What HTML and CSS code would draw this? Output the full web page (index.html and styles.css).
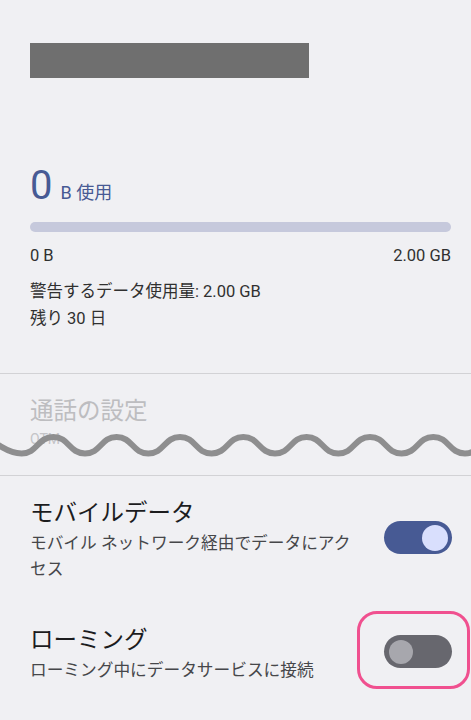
FILE: index.html
```html
<!DOCTYPE html>
<html lang="ja">
<head>
<meta charset="utf-8">
<link rel="stylesheet" href="styles.css">
</head>
<body>
<main class="screen">
  <section class="hero">
    <div class="redacted"></div>
  </section>

  <section class="usage">
    <div class="amount"><span class="amount-num">0</span><span class="amount-unit">B 使用</span></div>
    <div class="bar"></div>
    <div class="scale"><span>0 B</span><span>2.00 GB</span></div>
    <div class="notes">
      <p>警告するデータ使用量: 2.00 GB</p>
      <p>残り 30 日</p>
    </div>
  </section>

  <section class="call">
    <div class="call-title">通話の設定</div>
    <div class="call-sub">OTM</div>
    <svg class="wave" viewBox="0 0 471 30" width="471" height="30" aria-hidden="true">
      <path d="M-10 12 C -2 12 6 23.5 21.6 23.5 C 37.4 23.5 37.4 7 53.3 7 C 69.1 7 69.1 23.5 85 23.5 C 100.8 23.5 100.8 7 116.6 7 C 132.5 7 132.5 23.5 148.3 23.5 C 164.1 23.5 164.1 7 180 7 C 195.8 7 195.8 23.5 211.6 23.5 C 227.5 23.5 227.5 7 243.3 7 C 259.1 7 259.1 23.5 275 23.5 C 290.8 23.5 290.8 7 306.6 7 C 322.5 7 322.5 23.5 338.3 23.5 C 354.1 23.5 354.1 7 370 7 C 385.8 7 385.8 23.5 401.6 23.5 C 417.5 23.5 417.5 7 433.3 7 C 449.1 7 449.1 23.5 465 23.5 C 480.8 23.5 480.8 7 496.6 7" fill="none" stroke="#8e8e8f" stroke-width="6" stroke-linecap="round"/>
    </svg>
  </section>

  <section class="setting mobile">
    <div class="setting-text">
      <div class="setting-title">モバイルデータ</div>
      <div class="setting-sub">モバイル ネットワーク経由でデータにアクセス</div>
    </div>
    <div class="toggle toggle-on"><span class="knob"></span></div>
  </section>

  <section class="setting roaming">
    <div class="setting-text">
      <div class="setting-title">ローミング</div>
      <div class="setting-sub">ローミング中にデータサービスに接続</div>
    </div>
    <div class="toggle-wrap">
      <div class="toggle toggle-off"><span class="knob"></span></div>
      <span class="highlight"></span>
    </div>
  </section>
</main>
</body>
</html>
```

FILE: styles.css
```css
html, body {
  margin: 0;
  padding: 0;
  background: #f0f0f3;
}

body {
  font-family: "Roboto", "Noto Sans CJK JP", sans-serif;
  color: #1f1f1f;
  width: 471px;
  height: 720px;
  overflow: hidden;
}

.screen {
  display: flex;
  flex-direction: column;
}

.hero {
  padding: 43px 30px 0;
}

.redacted {
  width: 279px;
  height: 35px;
  background: #6f6f6f;
}

.usage {
  padding: 88px 20px 0 30px;
  display: flex;
  flex-direction: column;
}

.amount {
  display: flex;
  align-items: baseline;
  color: #475a94;
  height: 40px;
}

.amount-num {
  font-size: 40px;
  line-height: 40px;
}

.amount-unit {
  font-size: 18px;
  margin-left: 8px;
}

.bar {
  margin-top: 16px;
  height: 10px;
  border-radius: 5px;
  background: #c6c9dc;
}

.scale {
  margin-top: 14px;
  display: flex;
  justify-content: space-between;
  font-size: 16.5px;
  line-height: 20px;
  color: #303030;
}

.notes {
  margin-top: 12px;
  font-size: 16.5px;
  line-height: 27px;
  color: #303030;
}

.notes p {
  margin: 0;
}

.call {
  position: relative;
  margin-top: 41px;
  border-top: 1px solid #d2d2d5;
  border-bottom: 1px solid #d2d2d5;
  padding: 21px 30px 0;
  height: 80px;
}

.call-title {
  font-size: 23.5px;
  line-height: 32px;
  color: #bdbdc0;
}

.call-sub {
  margin-top: 2px;
  font-size: 14px;
  line-height: 20px;
  color: #c4c4c7;
}

.wave {
  position: absolute;
  left: 0;
  top: 56px;
}

.setting {
  display: flex;
  align-items: flex-start;
  padding: 21px 19px 0 30px;
}

.setting-text {
  width: 322px;
}

.setting-title {
  font-size: 23.5px;
  line-height: 32px;
  margin-bottom: 2px;
  color: #1c1c1e;
}

.setting-sub {
  font-size: 16.7px;
  line-height: 26px;
  color: #46474a;
}

.toggle {
  position: relative;
  width: 68px;
  height: 33px;
  border-radius: 17px;
  display: flex;
  align-items: center;
  box-sizing: border-box;
}

.toggle-on {
  margin-left: auto;
  margin-top: 24px;
  background: #475a94;
  justify-content: flex-end;
  padding-right: 4px;
}

.toggle-on .knob {
  width: 26px;
  height: 26px;
  border-radius: 50%;
  background: #d9dffd;
}

.toggle-off {
  background: #67676e;
  padding-left: 5px;
}

.toggle-off .knob {
  width: 24px;
  height: 24px;
  border-radius: 50%;
  background: #a7a7ad;
}

.roaming {
  padding-top: 41px;
}

.toggle-wrap {
  position: relative;
  margin-left: auto;
  margin-top: 11px;
}

.highlight {
  position: absolute;
  left: -27px;
  top: -24px;
  width: 113px;
  height: 78px;
  border: 3.5px solid #f0508f;
  border-radius: 20px;
  box-sizing: border-box;
}
```
